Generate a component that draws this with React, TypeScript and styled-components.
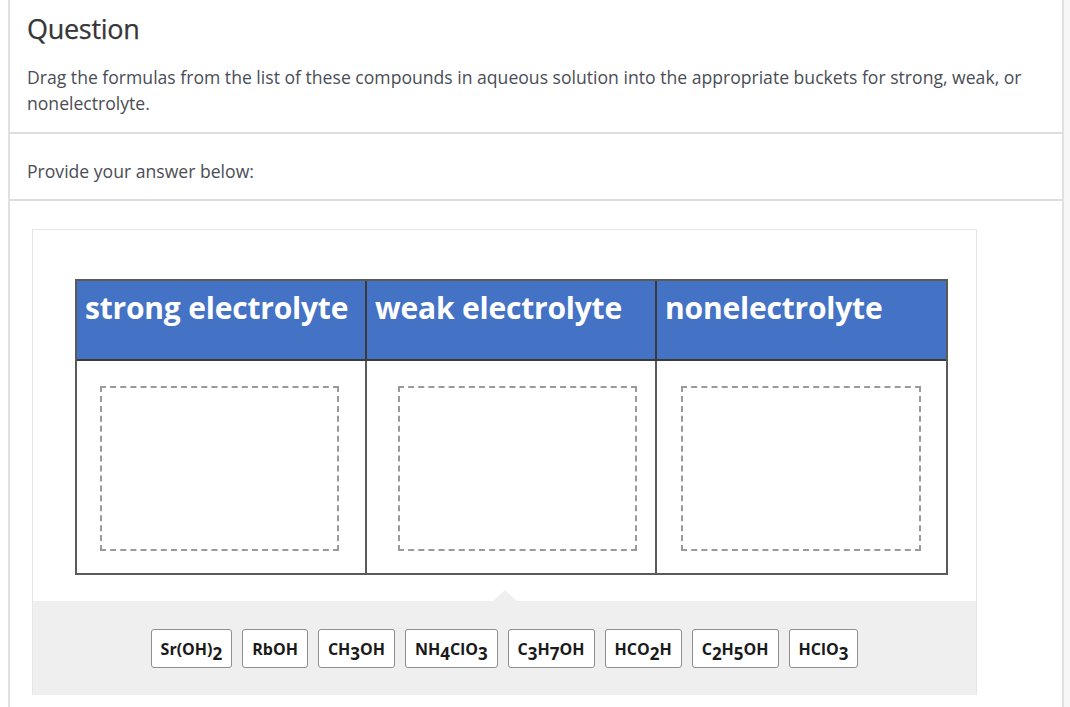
import styled, { createGlobalStyle } from 'styled-components'

const GlobalStyle = createGlobalStyle`
  html, body {
    margin: 0;
    padding: 0;
    background: #f7f7f7;
    font-family: 'Open Sans', 'Liberation Sans', sans-serif;
  }
`

interface Compound {
  parts: Array<string | number>
}

// strings are plain text, numbers are subscripts
const compounds: Compound[] = [
  { parts: ['Sr(OH)', 2] },
  { parts: ['RbOH'] },
  { parts: ['CH', 3, 'OH'] },
  { parts: ['NH', 4, 'ClO', 3] },
  { parts: ['C', 3, 'H', 7, 'OH'] },
  { parts: ['HCO', 2, 'H'] },
  { parts: ['C', 2, 'H', 5, 'OH'] },
  { parts: ['HClO', 3] },
]

const buckets = [
  { title: 'strong electrolyte', left: 23, right: 26 },
  { title: 'weak electrolyte', left: 31, right: 18 },
  { title: 'nonelectrolyte', left: 24, right: 25 },
]

function App() {
  return (
    <>
      <GlobalStyle />
      <Page>
        <Gutter />
        <Card>
          <Section>
            <Heading>Question</Heading>
            <Prompt>
              Drag the formulas from the list of these compounds in aqueous solution into the
              appropriate buckets for strong, weak, or nonelectrolyte.
            </Prompt>
          </Section>
          <Section $compact>
            <Label>Provide your answer below:</Label>
          </Section>
          <AnswerArea>
            <AnswerBox>
              <Stage>
                <BucketTable>
                  {buckets.map((b) => (
                    <HeaderCell key={b.title}>{b.title}</HeaderCell>
                  ))}
                  {buckets.map((b) => (
                    <BodyCell key={b.title} $left={b.left} $right={b.right}>
                      <DropZone />
                    </BodyCell>
                  ))}
                </BucketTable>
              </Stage>
              <Tray>
                {compounds.map((c, i) => (
                  <Chip key={i}>
                    {c.parts.map((p, j) =>
                      typeof p === 'number' ? <Sub key={j}>{p}</Sub> : <span key={j}>{p}</span>
                    )}
                  </Chip>
                ))}
              </Tray>
            </AnswerBox>
          </AnswerArea>
        </Card>
      </Page>
    </>
  )
}

const Page = styled.div`
  display: flex;
  min-height: 707px;
`

const Gutter = styled.div`
  width: 8px;
  background: #ffffff;
`

const Card = styled.div`
  width: 1052px;
  background: #ffffff;
  border-left: 2px solid #e0e0e0;
  border-right: 2px solid #e0e0e0;
  display: flex;
  flex-direction: column;
`

const Section = styled.div<{ $compact?: boolean }>`
  padding: ${(p) => (p.$compact ? '24px 17px 15px' : '9px 17px 16px')};
  border-bottom: 2px solid #dddddd;
`

const Heading = styled.h2`
  margin: 0 0 15px;
  font-size: 27px;
  line-height: 40px;
  font-weight: 400;
  color: #363636;
  letter-spacing: -0.3px;
  -webkit-text-stroke: 0.25px #363636;
`

const Prompt = styled.p`
  margin: 0;
  font-size: 17.6px;
  line-height: 26px;
  color: #4a4d55;
`

const Label = styled.div`
  font-size: 17.6px;
  line-height: 26px;
  color: #4a4d55;
`

const AnswerArea = styled.div`
  padding: 28px 0 0 22px;
`

const AnswerBox = styled.div`
  width: 943px;
  border: 1px solid #e6e6e6;
  border-bottom: none;
  display: flex;
  flex-direction: column;
`

const Stage = styled.div`
  padding: 49px 0 26px 42px;
  background: #ffffff;
`

const BucketTable = styled.div`
  display: grid;
  grid-template-columns: 290px 290px 289px;
  grid-template-rows: 80px 212px;
  width: max-content;
  border: 2px solid #5a5a5a;
`

const HeaderCell = styled.div`
  background: #4472c4;
  color: #ffffff;
  font-family: 'Open Sans', sans-serif;
  font-weight: 700;
  font-size: 30px;
  letter-spacing: -0.2px;
  line-height: 1;
  padding: 12px 0 0 8px;
  border-bottom: 2px solid #3a3a3a;
  border-right: 2px solid #3a3a3a;
  white-space: nowrap;
  overflow: hidden;
  &:nth-child(3) {
    border-right: none;
  }
`

const BodyCell = styled.div<{ $left: number; $right: number }>`
  background: #ffffff;
  padding: 25px ${(p) => p.$right}px 22px ${(p) => p.$left}px;
  border-right: 2px solid #5a5a5a;
  display: flex;
  &:nth-child(6) {
    border-right: none;
  }
`

const DropZone = styled.div`
  flex: 1;
  border: 2px dashed #9a9a9a;
`

const Tray = styled.div`
  position: relative;
  background: #efefef;
  display: flex;
  justify-content: center;
  gap: 10px;
  padding: 28px 0 27px;
  &::before {
    content: '';
    position: absolute;
    top: -11px;
    left: 460px;
    border-left: 12px solid transparent;
    border-right: 12px solid transparent;
    border-bottom: 11px solid #efefef;
  }
`

const Chip = styled.div`
  height: 39px;
  box-sizing: border-box;
  padding: 0 9px;
  display: flex;
  align-items: center;
  background: #ffffff;
  border: 1px solid #8f8f8f;
  border-radius: 3px;
  font-family: 'Open Sans', sans-serif;
  font-weight: 700;
  font-size: 16px;
  color: #1a1a1a;
`

const Sub = styled.span`
  position: relative;
  top: 5px;
  font-size: 17px;
`

export default App
